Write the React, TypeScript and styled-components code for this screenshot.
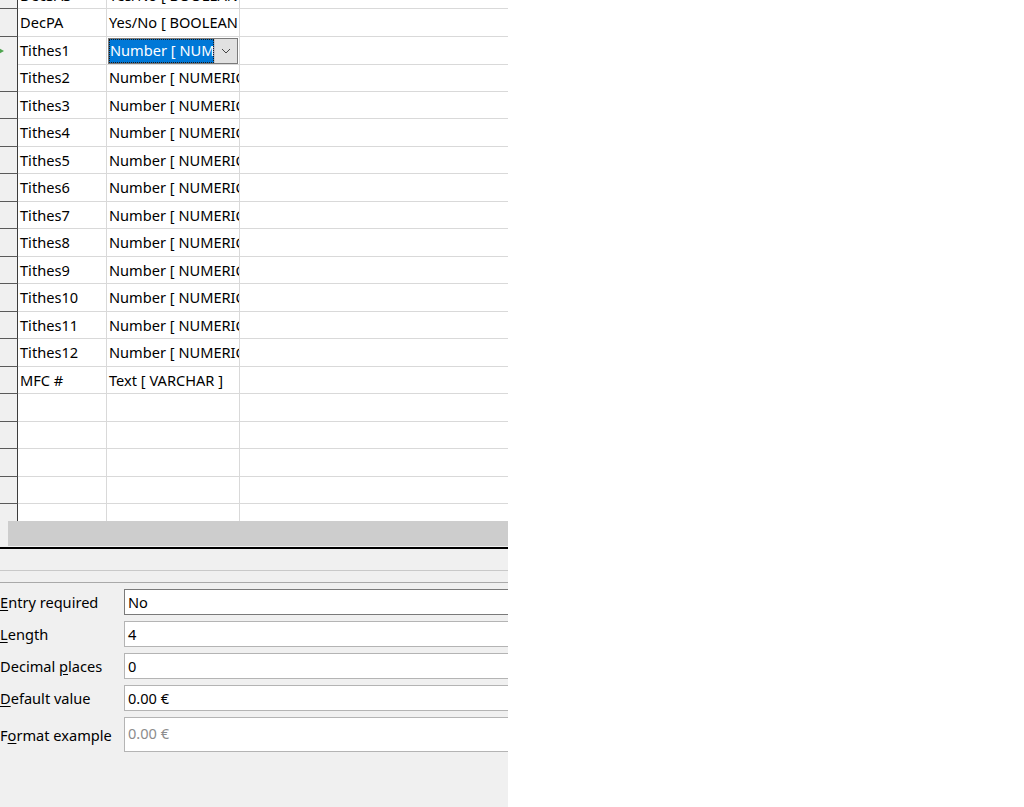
import React from 'react';
import styled, { createGlobalStyle } from 'styled-components';

const GlobalStyle = createGlobalStyle`
  html, body {
    margin: 0;
    padding: 0;
    background: #ffffff;
  }
  body {
    font-family: "Noto Sans", "Open Sans", sans-serif;
    color: #000;
  }
`;

const Window = styled.div`
  width: 508px;
  height: 807px;
  display: flex;
  flex-direction: column;
  overflow: hidden;
  background: #f0f0f0;
`;

const GridArea = styled.div`
  height: 521px;
  flex: none;
  overflow: hidden;
  background: #fff;
`;

/* the table is scrolled down a little, so the first row is cut */
const GridBody = styled.div`
  margin-top: -18.5px;
`;

const Row = styled.div`
  display: grid;
  grid-template-columns: 18px 89px 133px 1fr;
  height: 27.5px;
`;

const RowHeader = styled.div`
  position: relative;
  background: #f0f0f0;
  border-right: 1px solid #3c3c3c;
  border-bottom: 1px solid #5a5a5a;
`;

const Cell = styled.div`
  border-right: 1px solid #d9d9d9;
  border-bottom: 1px solid #d9d9d9;
  padding-left: 2px;
  font-size: 14.6px;
  line-height: 27px;
  white-space: nowrap;
  overflow: hidden;
`;

const FillerCell = styled.div`
  border-bottom: 1px solid #d9d9d9;
`;

const CurrentMark = styled.span`
  position: absolute;
  left: -3px;
  top: 10px;
  width: 0;
  height: 0;
  border-top: 4px solid transparent;
  border-bottom: 4px solid transparent;
  border-left: 7px solid #4fa54f;
`;

const EditCell = styled.div`
  border-right: 1px solid #d9d9d9;
  border-bottom: 1px solid #d9d9d9;
  padding: 1px 1px 0 1px;
`;

const Combo = styled.div`
  display: flex;
  height: 24px;
  border: 1px solid #7a7a7a;
  background: #fff;
`;

const ComboText = styled.div`
  flex: 1;
  min-width: 0;
  background: #0078d7;
  color: #fff;
  font-size: 14.6px;
  line-height: 23px;
  padding-left: 1px;
  white-space: nowrap;
  overflow: hidden;
  outline: 1px dotted #1a1a1a;
  outline-offset: -1px;
`;

const ComboButton = styled.div`
  width: 22px;
  flex: none;
  background: #e1e1e1;
  border-left: 1px solid #c8c8c8;
  display: flex;
  align-items: center;
  justify-content: center;
`;

const ScrollTrack = styled.div`
  height: 25px;
  flex: none;
  display: flex;
  background: #cdcdcd;
  border-bottom: 1px solid #f0f0f0;
`;

const ScrollCorner = styled.div`
  width: 8px;
  background: #f0f0f0;
`;

const Splitter = styled.div`
  height: 2px;
  flex: none;
  background: #000;
`;

const Band = styled.div<{ $h: number; $line: string }>`
  height: ${(p) => p.$h}px;
  flex: none;
  background: #f0f0f0;
  border-bottom: 1px solid ${(p) => p.$line};
`;

const Form = styled.div`
  display: grid;
  grid-template-columns: 124px 1fr;
  row-gap: 6px;
  padding-top: 6px;
  align-items: center;
`;

const Label = styled.div`
  font-size: 14.6px;
  white-space: nowrap;
  u {
    text-decoration-thickness: 1px;
    text-underline-offset: 2px;
  }
`;

const Field = styled.div<{ $h?: number; $strong?: boolean; $disabled?: boolean }>`
  height: ${(p) => p.$h ?? 26}px;
  box-sizing: border-box;
  width: 420px;
  border: 1px solid ${(p) => (p.$strong ? '#7a7a7a' : '#b4b4b4')};
  background: #fff;
  font-size: 14.6px;
  line-height: 24px;
  padding-left: 3px;
  color: ${(p) => (p.$disabled ? '#8c8c8c' : '#000')};
  display: flex;
  align-items: ${(p) => (p.$h ? 'flex-start' : 'center')};
  padding-top: ${(p) => (p.$h ? '3px' : '0')};
`;

type FieldRow = {
  name: string;
  type: string;
};

const rows: FieldRow[] = [
  { name: 'DecSAS', type: 'Yes/No [ BOOLEAN ]' },
  { name: 'DecPA', type: 'Yes/No [ BOOLEAN ]' },
  { name: 'Tithes1', type: 'Number [ NUMERIC ]' },
  ...Array.from({ length: 11 }, (_, i) => ({
    name: `Tithes${i + 2}`,
    type: 'Number [ NUMERIC ]',
  })),
  { name: 'MFC #', type: 'Text [ VARCHAR ]' },
  { name: '', type: '' },
  { name: '', type: '' },
  { name: '', type: '' },
  { name: '', type: '' },
  { name: '', type: '' },
];

function Chevron() {
  return (
    <svg width="10" height="6" viewBox="0 0 10 6">
      <path d="M1 1 L5 5 L9 1" fill="none" stroke="#444" strokeWidth="1" />
    </svg>
  );
}

export default function App() {
  return (
    <>
      <GlobalStyle />
      <Window>
        <GridArea>
          <GridBody>
            {rows.map((r, i) => {
              const current = r.name === 'Tithes1';
              return (
                <Row key={i}>
                  <RowHeader>{current && <CurrentMark />}</RowHeader>
                  <Cell>{r.name}</Cell>
                  {current ? (
                    <EditCell>
                      <Combo>
                        <ComboText>{r.type}</ComboText>
                        <ComboButton>
                          <Chevron />
                        </ComboButton>
                      </Combo>
                    </EditCell>
                  ) : (
                    <Cell>{r.type}</Cell>
                  )}
                  <FillerCell />
                </Row>
              );
            })}
          </GridBody>
        </GridArea>
        <ScrollTrack>
          <ScrollCorner />
        </ScrollTrack>
        <Splitter />
        <Band $h={21} $line="#c9c9c9" />
        <Band $h={11} $line="#a9a9a9" />
        <Form>
          <Label>
            <u>E</u>ntry required
          </Label>
          <Field $strong>No</Field>
          <Label>
            <u>L</u>ength
          </Label>
          <Field>4</Field>
          <Label>
            Decimal <u>p</u>laces
          </Label>
          <Field>0</Field>
          <Label>
            <u>D</u>efault value
          </Label>
          <Field>0.00 €</Field>
          <Label>
            F<u>o</u>rmat example
          </Label>
          <Field $h={35} $disabled>
            0.00 €
          </Field>
        </Form>
      </Window>
    </>
  );
}
